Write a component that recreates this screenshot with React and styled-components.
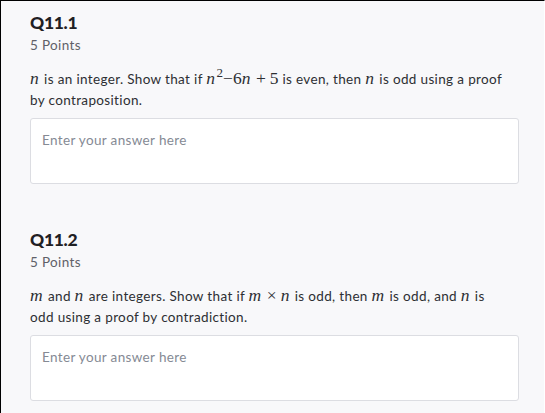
import React from 'react';
import styled, { createGlobalStyle } from 'styled-components';

const GlobalStyle = createGlobalStyle`
  html, body {
    margin: 0;
    padding: 0;
    background: #f8f8fa;
  }
  body {
    font-family: Lato, "Open Sans", sans-serif;
  }
`;

const Page = styled.div`
  box-sizing: border-box;
  width: 545px;
  height: 413px;
  overflow: hidden;
  background: #f8f8fa;
  border-top: 1px solid #000;
  border-left: 1px solid #000;
  border-right: 1px solid #ffffff;
  padding: 11px 26px 0 29px;
`;

const Question = styled.section`
  display: flex;
  flex-direction: column;
  margin-bottom: 45px;
`;

const Title = styled.h2`
  margin: 0;
  font-size: 17.5px;
  line-height: 22px;
  font-weight: 900;
  color: #1f2023;
  letter-spacing: -0.3px;
`;

const Points = styled.div`
  margin-top: 1px;
  font-size: 13.5px;
  line-height: 20px;
  letter-spacing: 0.35px;
  color: #5f6168;
`;

const Prompt = styled.p`
  margin: 14px 0 0;
  max-width: 476px;
  font-size: 13.5px;
  line-height: 21px;
  letter-spacing: 0.35px;
  color: #2d2f33;
`;

const Var = styled.span`
  font-family: "Liberation Serif", "DejaVu Serif", serif;
  font-style: italic;
  font-size: 17.5px;
  line-height: 0;
  letter-spacing: 0.5px;
  padding-right: 1px;
`;

const Num = styled.span`
  font-family: "Liberation Serif", "DejaVu Serif", serif;
  font-size: 17.5px;
  line-height: 0;
  letter-spacing: 0;
  margin: ${(p) => (p.$op ? '0 4px' : '0')};
`;

const Sup = styled.sup`
  font-family: "Liberation Serif", "DejaVu Serif", serif;
  font-size: 13px;
  line-height: 0;
  letter-spacing: 0;
  vertical-align: 7px;
`;

const Answer = styled.textarea`
  box-sizing: border-box;
  margin-top: 7px;
  width: 489px;
  height: 66px;
  padding: 11px 11px;
  resize: none;
  background: #fff;
  border: 1px solid #dcdde2;
  border-radius: 3px;
  font-family: Lato, "Open Sans", sans-serif;
  font-size: 13.5px;
  line-height: 20px;
  letter-spacing: 0.35px;
  color: #2d2f33;
  outline: none;

  &::placeholder {
    color: #858a94;
  }
`;

const questions = [
  {
    id: 'Q11.1',
    points: 5,
    prompt: (
      <>
        <Var>n</Var> is an integer. Show that if <Var>n</Var>
        <Sup>2</Sup>
        <Num>−6</Num>
        <Var>n</Var>
        <Num $op>+</Num>
        <Num>5</Num> is even, then <Var>n</Var> is odd using a proof by contraposition.
      </>
    ),
  },
  {
    id: 'Q11.2',
    points: 5,
    prompt: (
      <>
        <Var>m</Var> and <Var>n</Var> are integers. Show that if <Var>m</Var>
        <Num $op>×</Num>
        <Var>n</Var> is odd, then <Var>m</Var> is odd, and <Var>n</Var> is odd using a proof by
        contradiction.
      </>
    ),
  },
];

const App = () => {
  return (
    <>
      <GlobalStyle />
      <Page>
        {questions.map((q) => (
          <Question key={q.id}>
            <Title>{q.id}</Title>
            <Points>{q.points} Points</Points>
            <Prompt>{q.prompt}</Prompt>
            <Answer placeholder="Enter your answer here" />
          </Question>
        ))}
      </Page>
    </>
  );
};

export default App;
